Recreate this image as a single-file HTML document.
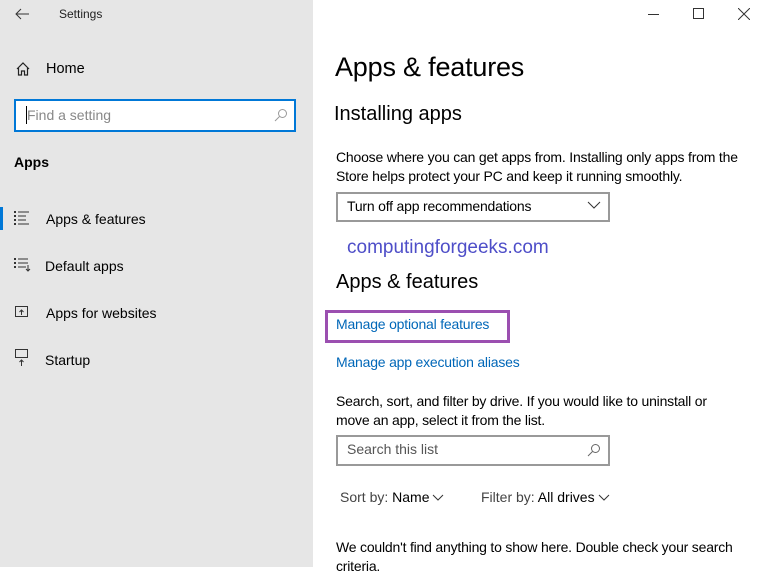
<!DOCTYPE html>
<html><head><meta charset="utf-8"><style>
*{margin:0;padding:0;box-sizing:border-box}
body{width:768px;height:567px;overflow:hidden;font-family:"Liberation Sans",sans-serif;background:#fff;position:relative;color:#000}
.side{position:absolute;left:0;top:0;width:313px;height:567px;background:#e6e6e6}
.a{position:absolute;white-space:nowrap}
.t14{font-size:14px}
.p{letter-spacing:-0.2px}
.link{color:#0067b8;font-size:14px}
</style></head><body>
<div class="side"></div>
<svg class="a" style="left:14px;top:7px" width="16" height="14"><path d="M15 7H2M7 2L2 7l5 5" fill="none" stroke="#333" stroke-width="1"/></svg>
<div class="a" style="left:59px;top:7px;font-size:12px;color:#222">Settings</div>
<svg class="a" style="left:15px;top:61px" width="16" height="16"><path d="M2 8L8 2l6 6M3.5 7v7h3v-4h3v4h3V7" fill="none" stroke="#222" stroke-width="1.2"/></svg>
<div class="a t14" style="left:46px;top:61px;font-size:14.5px">Home</div>
<div class="a" style="left:14px;top:99px;width:282px;height:33px;border:2px solid #0078d7;background:#fff"></div>
<div class="a" style="left:26px;top:106px;width:1px;height:18px;background:#000"></div>
<div class="a t14" style="left:27px;top:107px;color:#888">Find a setting</div>
<svg class="a" style="left:274px;top:108px" width="14" height="14"><circle cx="8.5" cy="5.5" r="4" fill="none" stroke="#999"/><path d="M5.5 8.5L1 13" stroke="#999"/></svg>
<div class="a" style="left:14px;top:154px;font-size:14px;font-weight:bold">Apps</div>
<div class="a" style="left:0;top:207px;width:3px;height:23px;background:#0078d7"></div>
<svg class="a" style="left:14px;top:210px" width="16" height="16"><g fill="#333"><rect x="0" y="1" width="2" height="2"/><rect x="0" y="5" width="2" height="2"/><rect x="0" y="9" width="2" height="2"/><rect x="0" y="13" width="2" height="2"/></g><g stroke="#333"><path d="M4 2h11M4 6h8M4 10h8M4 14h11"/></g></svg>
<div class="a t14" style="left:46px;top:211px">Apps &amp; features</div>
<svg class="a" style="left:14px;top:257px" width="17" height="16"><g fill="#333"><rect x="0" y="1" width="2" height="2"/><rect x="0" y="5" width="2" height="2"/><rect x="0" y="9" width="2" height="2"/></g><g stroke="#333" fill="none"><path d="M4 2h10M4 6h10M4 10h8M14 8v6M12 12l2 2 2-2"/></g></svg>
<div class="a t14" style="left:45px;top:258px">Default apps</div>
<svg class="a" style="left:15px;top:305px" width="14" height="14"><g stroke="#333" fill="none"><rect x="0.5" y="1.5" width="12" height="10"/><path d="M6.5 10V5M4.5 7l2-2 2 2"/></g></svg>
<div class="a t14" style="left:46px;top:305px">Apps for websites</div>
<svg class="a" style="left:15px;top:349px" width="14" height="18"><g stroke="#333" fill="none"><rect x="0.5" y="0.5" width="12" height="8"/><path d="M6.5 17v-6M4.5 13l2-2 2 2"/></g></svg>
<div class="a t14" style="left:45px;top:352px">Startup</div>
<div class="a" style="left:648px;top:14px;width:11px;height:1px;background:#333"></div>
<div class="a" style="left:693px;top:8px;width:11px;height:11px;border:1px solid #333"></div>
<svg class="a" style="left:738px;top:8px" width="12" height="12"><path d="M0 0L12 12M12 0L0 12" stroke="#333"/></svg>
<div class="a" style="left:335px;top:52px;font-size:27px;letter-spacing:-0.2px">Apps &amp; features</div>
<div class="a" style="left:334px;top:103px;font-size:20px">Installing apps</div>
<div class="a t14 p" style="left:336px;top:148px;line-height:19px">Choose where you can get apps from. Installing only apps from the<br>Store helps protect your PC and keep it running smoothly.</div>
<div class="a" style="left:336px;top:192px;width:274px;height:30px;border:2px solid #999"></div>
<div class="a t14 p" style="left:347px;top:198px">Turn off app recommendations</div>
<svg class="a" style="left:587px;top:201px" width="14" height="8"><path d="M1 1l6 6 6-6" fill="none" stroke="#333"/></svg>
<div class="a" style="left:347px;top:237px;font-size:19px;color:#4e4ec8">computingforgeeks.com</div>
<div class="a" style="left:336px;top:271px;font-size:20px">Apps &amp; features</div>
<div class="a" style="left:325px;top:310px;width:185px;height:33px;border:3px solid #9b4fb0"></div>
<div class="a link p" style="left:336px;top:316px">Manage optional features</div>
<div class="a link p" style="left:336px;top:354px">Manage app execution aliases</div>
<div class="a t14 p" style="left:336px;top:392px;line-height:19px">Search, sort, and filter by drive. If you would like to uninstall or<br>move an app, select it from the list.</div>
<div class="a" style="left:336px;top:435px;width:274px;height:31px;border:2px solid #999"></div>
<div class="a t14" style="left:347px;top:441px;color:#555">Search this list</div>
<svg class="a" style="left:587px;top:443px" width="14" height="14"><circle cx="8.5" cy="5.5" r="4" fill="none" stroke="#666"/><path d="M5.5 8.5L1 13" stroke="#666"/></svg>
<div class="a t14" style="left:340px;top:489px;color:#444">Sort by: <span style="color:#000">Name</span></div>
<svg class="a" style="left:432px;top:494px" width="12" height="7"><path d="M1 1l5 5 5-5" fill="none" stroke="#333"/></svg>
<div class="a t14" style="left:481px;top:489px;color:#444">Filter by: <span style="color:#000">All drives</span></div>
<svg class="a" style="left:598px;top:494px" width="12" height="7"><path d="M1 1l5 5 5-5" fill="none" stroke="#333"/></svg>
<div class="a t14 p" style="left:336px;top:538px;line-height:19px">We couldn't find anything to show here. Double check your search<br>criteria.</div>
</body></html>
